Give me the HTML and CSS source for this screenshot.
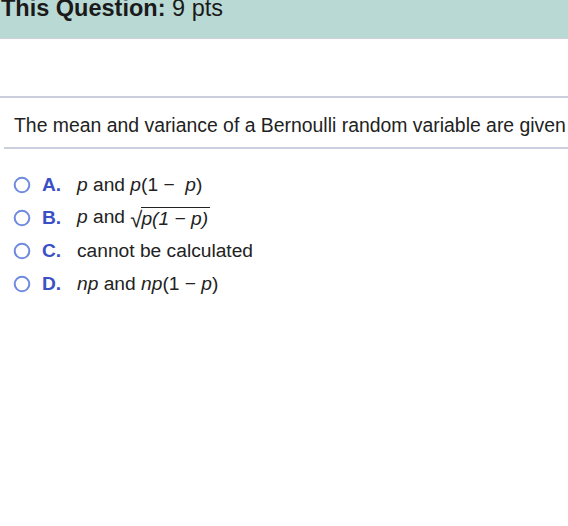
FILE: index.html
```html
<!DOCTYPE html>
<html>
<head>
<meta charset="utf-8">
<link rel="stylesheet" href="styles.css">
</head>
<body>
<div class="header">
  <h1 class="title"><b>This Question:</b> 9 pts</h1>
</div>
<div class="question">
  <p class="stem">The mean and variance of a Bernoulli random variable are given</p>
</div>
<ul class="options">
  <li class="option">
    <svg class="radio" width="18" height="18" viewBox="0 0 18 18"><circle cx="9" cy="9" r="7.3" fill="#fff" stroke="#6f8ade" stroke-width="2"/></svg>
    <span class="letter">A.</span>
    <span class="answer"><i>p</i> and <i>p</i>(1 −&nbsp; <i>p</i>)</span>
  </li>
  <li class="option">
    <svg class="radio" width="18" height="18" viewBox="0 0 18 18"><circle cx="9" cy="9" r="7.3" fill="#fff" stroke="#6f8ade" stroke-width="2"/></svg>
    <span class="letter">B.</span>
    <span class="answer"><i>p</i> and <span class="sqrt"><span class="radical">√</span><span class="radicand"><i>p(1 − p)</i></span></span></span>
  </li>
  <li class="option">
    <svg class="radio" width="18" height="18" viewBox="0 0 18 18"><circle cx="9" cy="9" r="7.3" fill="#fff" stroke="#6f8ade" stroke-width="2"/></svg>
    <span class="letter">C.</span>
    <span class="answer">cannot be calculated</span>
  </li>
  <li class="option">
    <svg class="radio" width="18" height="18" viewBox="0 0 18 18"><circle cx="9" cy="9" r="7.3" fill="#fff" stroke="#6f8ade" stroke-width="2"/></svg>
    <span class="letter">D.</span>
    <span class="answer"><i>np</i> and <i>np</i>(1 − <i>p</i>)</span>
  </li>
</ul>
</body>
</html>
```

FILE: styles.css
```css
html, body {
  margin: 0;
  padding: 0;
  background: #ffffff;
}
body {
  font-family: "Liberation Sans", Arial, sans-serif;
  color: #1a1a1a;
  overflow: hidden;
}
.header {
  height: 38px;
  background: #b9d9d4;
  border-bottom: 1px solid #cfd0dc;
}
.title {
  margin: 0;
  padding-left: 1px;
  font-size: 23.5px;
  line-height: 17px;
  font-weight: normal;
  color: #1a1a1a;
}
.title b {
  font-weight: bold;
}
.question {
  margin-top: 57px;
  border-top: 2px solid #cbcedc;
}
.stem {
  margin: 0 0 0 4px;
  padding: 17px 0 12px 10px;
  font-size: 19.4px;
  line-height: 20px;
  white-space: nowrap;
  border-bottom: 2px solid #cbcedc;
  color: #222;
}
.options {
  list-style: none;
  margin: 0;
  padding: 26px 0 0 13px;
  display: flex;
  flex-direction: column;
  gap: 13px;
}
.option {
  display: flex;
  align-items: center;
  height: 20px;
  font-size: 19.2px;
  color: #222;
}
.radio {
  flex: none;
  display: block;
}
.letter {
  margin-left: 11px;
  width: 35px;
  font-weight: bold;
  color: #3a50c4;
}
.answer {
  white-space: nowrap;
}
.sqrt {
  display: inline-flex;
  align-items: flex-end;
  vertical-align: -4px;
}
.radical {
  font-size: 22px;
  line-height: 23px;
  margin-right: -1px;
}
.radicand {
  border-top: 1px solid #222;
  line-height: 19px;
  padding-top: 1px;
  padding-right: 2px;
  margin-bottom: 3px;
}
```
